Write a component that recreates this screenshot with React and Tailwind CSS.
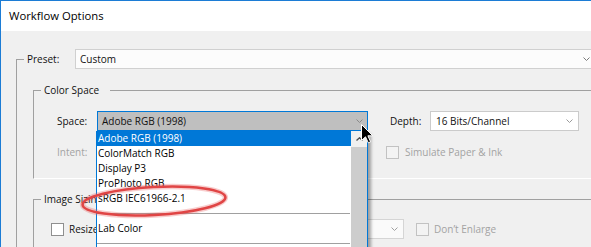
import React from "react";

function Chevron({ color = "#7a7a7a" }) {
  return (
    <svg width="7" height="4" viewBox="0 0 7 4" className="shrink-0">
      <polyline points="0.5,0.5 3.5,3.5 6.5,0.5" fill="none" stroke={color} strokeWidth="1" />
    </svg>
  );
}

function Checkbox({ disabled }) {
  return (
    <span
      className={
        disabled
          ? "block w-[13px] h-[13px] shrink-0 border border-[#c2c2c2] bg-[#f3f3f3]"
          : "block w-[13px] h-[13px] shrink-0 border border-[#8f8f8f] bg-white"
      }
    />
  );
}

const colorSpaces = ["Adobe RGB (1998)", "ColorMatch RGB", "Display P3", "ProPhoto RGB", "sRGB IEC61966-2.1"];

export default function App() {
  return (
    <div className="relative w-[591px] h-[247px] overflow-hidden border-l border-t border-[#1c7cd5] bg-[#f0f0f0] font-['Open_Sans',sans-serif] text-[10px] text-[#111]">
      {/* Title bar */}
      <div className="h-[30px] bg-white flex items-center pl-[8px] text-[11.3px] text-black">
        Workflow Options
      </div>

      <div className="pl-[15px] pt-[18px]">
        {/* Preset group */}
        <fieldset className="w-[640px] h-[300px] border-l border-t border-[#a0a0a0]">
          <legend className="ml-[7px] px-[3px]">
            <div className="flex items-center">
              <span className="w-[48px]">Preset:</span>
              <div className="w-[521px] h-[20px] border border-[#d0d0d0] bg-[#fcfcfc] flex items-center justify-between pl-[4px] pr-[5px]">
                <span>Custom</span>
                <Chevron />
              </div>
            </div>
          </legend>

          {/* Color Space */}
          <fieldset className="ml-[16px] mt-[14px] w-[600px] border-l border-t border-b border-[#a0a0a0] border-b-white pb-[16px]">
            <legend className="ml-[7px] pl-[3px] pr-[11px] leading-[14px]">Color Space</legend>
            <div className="pt-[14px] pl-[23px] flex items-center">
              <span className="w-[40px]">Space:</span>
              <div className="w-[271px] h-[20px] border border-[#0078d7] bg-[#bfbfbf] flex items-center justify-between pl-[4px] pr-[4px]">
                <span>Adobe RGB (1998)</span>
                <Chevron color="#8a8a8a" />
              </div>
              <span className="ml-[22px] w-[40px]">Depth:</span>
              <div className="w-[149px] h-[20px] border border-[#cbcbcb] bg-white flex items-center justify-between pl-[5px] pr-[5px]">
                <span>16 Bits/Channel</span>
                <Chevron color="#9a9a9a" />
              </div>
            </div>
            <div className="mt-[11px] h-[20px] pl-[23px] flex items-center">
              <span className="w-[40px] text-[#a3a3a3]">Intent:</span>
              <div className="w-[271px] h-[20px] border border-[#d5d5d5] bg-[#f5f5f5]" />
              <span className="ml-[18px]">
                <Checkbox disabled />
              </span>
              <span className="ml-[6px] text-[#a3a3a3]">Simulate Paper &amp; Ink</span>
            </div>
          </fieldset>

          {/* Image Sizing */}
          <fieldset className="ml-[16px] mt-[13px] w-[600px] h-[100px] border-l border-t border-[#a0a0a0]">
            <legend className="ml-[7px] pl-[3px] pr-[11px] leading-[14px]">Image Sizing</legend>
            <div className="mt-[13px] h-[20px] pl-[17px] flex items-center">
              <Checkbox />
              <span className="ml-[5px] w-[81px]">Resize to Fit:</span>
              <div className="w-[254px] h-[20px] border border-[#d5d5d5] bg-[#fafafa] flex items-center justify-end pr-[5px]">
                <Chevron color="#a0a0a0" />
              </div>
              <span className="ml-[12px]">
                <Checkbox disabled />
              </span>
              <span className="ml-[5px] text-[#a3a3a3]">Don&rsquo;t Enlarge</span>
            </div>
          </fieldset>
        </fieldset>
      </div>

      {/* Open dropdown list */}
      <div className="absolute left-[95px] top-[130px] w-[272px] h-[130px] flex border-x border-[#0078d7] bg-white shadow-[3px_3px_3px_rgba(0,0,0,0.35)]">
        <div className="flex-1 leading-[15px]">
          {colorSpaces.map((name, i) => (
            <div
              key={name}
              className={i === 0 ? "h-[15px] pl-[1px] bg-[#0078d7] text-white" : "h-[15px] pl-[1px] text-black"}
            >
              {name}
            </div>
          ))}
          <div className="h-[15px] flex items-center pr-[1px]">
            <div className="h-px w-full bg-[#a0a0a0]" />
          </div>
          <div className="h-[15px] pl-[1px] text-black">Lab Color</div>
          <div className="h-[15px] flex items-center pr-[1px]">
            <div className="h-px w-full bg-[#a0a0a0]" />
          </div>
        </div>
        <div className="w-[16px] flex flex-col">
          <div className="h-[16px] bg-[#f0f0f0] flex items-center justify-center">
            <svg width="7" height="4" viewBox="0 0 7 4">
              <polyline points="0.5,3.5 3.5,0.8 6.5,3.5" fill="none" stroke="#505050" strokeWidth="1.4" />
            </svg>
          </div>
          <div className="flex-1 bg-[#cdcdcd]" />
        </div>
      </div>

      {/* Red annotation ellipse */}
      <svg className="absolute left-[76px] top-[180px]" width="160" height="42" viewBox="0 0 160 42">
        <g transform="rotate(-3 77 20)">
          <ellipse cx="77" cy="20" rx="71.5" ry="14" fill="none" stroke="rgba(232,90,90,0.3)" strokeWidth="5.5" />
          <ellipse cx="77" cy="20" rx="71.5" ry="14" fill="none" stroke="#e04545" strokeWidth="2.6" />
        </g>
      </svg>

      {/* Mouse cursor */}
      <svg className="absolute left-[360px] top-[123px]" width="13" height="20" viewBox="0 0 13 20">
        <path
          d="M0.5 0.5 L0.5 16.5 L4.5 12.8 L7.3 18.8 L9.6 17.8 L6.9 11.8 L11.8 11.8 Z"
          fill="#000"
          stroke="#fff"
          strokeWidth="1"
          strokeLinejoin="round"
        />
      </svg>
    </div>
  );
}
